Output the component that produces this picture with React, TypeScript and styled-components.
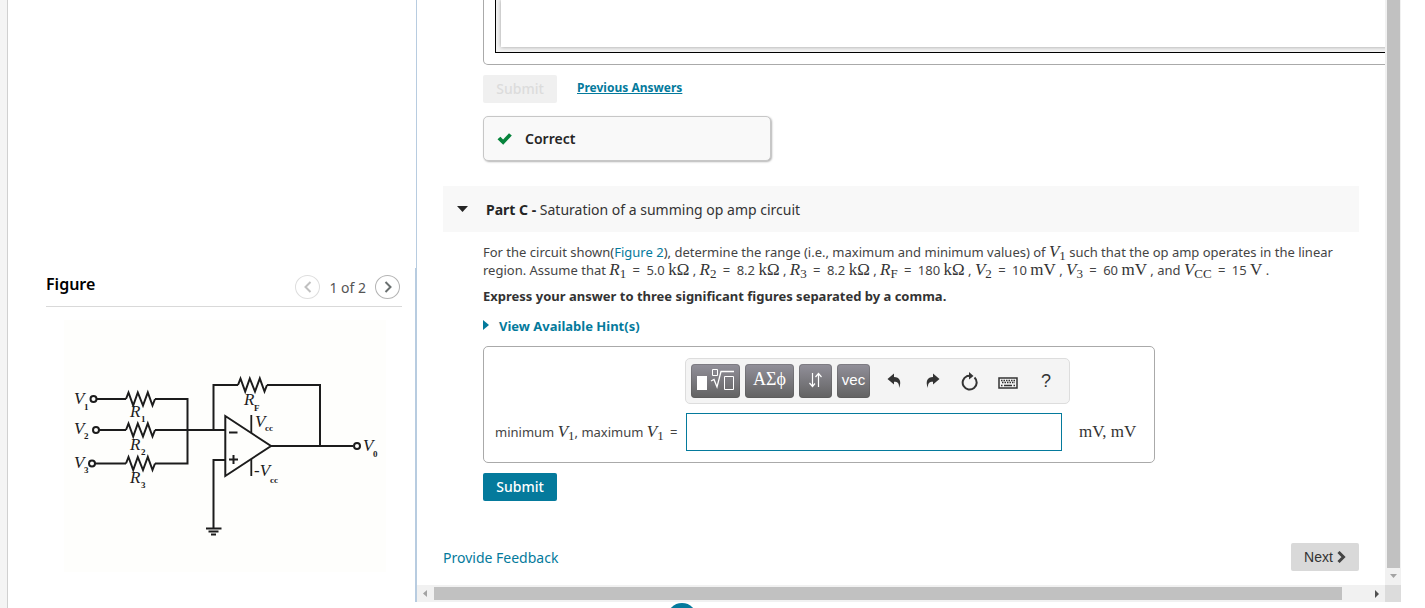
import React from "react";
import styled, { createGlobalStyle } from "styled-components";

const TEAL = "#047a9c";
const MATH = '"Liberation Serif", "Times New Roman", serif';

const GlobalStyle = createGlobalStyle`
  *, *::before, *::after { box-sizing: border-box; }
  body { margin: 0; background: #fff; color: #252525; font-family: "Segoe UI", "Noto Sans", "Open Sans", sans-serif; font-size: 13px; }
  button { font-family: inherit; border: 0; padding: 0; cursor: pointer; }
  p, h2, h3 { margin: 0; }
`;

const Page = styled.div`
  display: flex;
  height: 100vh;
  overflow: hidden;
`;
const Gutter = styled.div`
  flex: none;
  width: 8px;
  background: #f4f4f4;
  border-right: 1px solid #d0d0d0;
`;
const Shell = styled.div`
  flex: 1;
  min-width: 0;
  display: flex;
  flex-direction: column;
  padding-right: 24px;
`;
const Workspace = styled.div`
  flex: 1;
  min-height: 0;
  display: flex;
`;
const BottomStrip = styled.footer`
  flex: none;
  height: 6px;
  padding: 1px 0 0 659px;
  overflow: hidden;
`;
const HelpBubble = styled.button`
  display: block;
  width: 30px;
  height: 30px;
  border-radius: 50%;
  background: ${TEAL};
`;

/* Left column */
const Side = styled.aside`
  flex: none;
  width: 409px;
  display: flex;
  flex-direction: column;
`;
const SideTop = styled.div`
  flex: 268 0 0;
  border-right: 1px solid #b8cce0;
`;
const FigurePane = styled.section`
  flex: 334 0 0;
  min-height: 0;
  padding: 0 13px 0 38px;
  border-right: 2px solid #b8cce0;
  overflow: hidden;
`;
const FigureHeader = styled.header`
  display: flex;
  align-items: center;
  height: 39px;
  border-bottom: 1px solid #d9d9d9;
`;
const FigureTitle = styled.h2`
  flex: 1;
  padding-bottom: 7px;
  font-size: 16px;
  line-height: 24px;
  font-weight: 600;
  color: #000;
`;
const Pager = styled.nav`
  display: flex;
  align-items: center;
  gap: 9px;
  padding-right: 2px;
  font-size: 14px;
  color: #555;
`;
const PagerButton = styled.button`
  display: flex;
  align-items: center;
  justify-content: center;
  width: 25px;
  height: 24px;
  border: 1px solid #b4b4b4;
  border-radius: 50%;
  background: #fff;
  color: #6a7070;
  &:disabled { border-color: #dedede; color: #c0c0c0; }
`;
const Circuit = styled.svg`
  display: block;
  margin: 13px 0 0 18px;
  background: #fefefc;
  fill: none;
  stroke: #1c1c1c;
  stroke-width: 2;
  text { stroke: none; fill: #1c1c1c; font-family: ${MATH}; font-style: italic; font-size: 17px; }
  .sub { font-style: normal; font-weight: 700; font-size: 9px; }
`;

/* Main column */
const Main = styled.main`
  flex: 1;
  min-width: 0;
  display: flex;
  flex-direction: column;
`;
const ScrollRow = styled.div`
  flex: 1;
  min-height: 0;
  display: flex;
`;
const Content = styled.div`
  flex: 1;
  min-width: 0;
  padding: 0 26px;
  overflow: hidden;
`;
const Indent = styled.div`
  padding-left: 40px;
`;
const DrawingBox = styled.div`
  width: 1000px;
  padding: 0 11px 11px;
  border: 1px solid #aaa;
  border-top: 0;
  border-radius: 0 0 5px 5px;
`;
const DrawingFrame = styled.div`
  padding: 0 5px 5px;
  border: 1px solid #000;
  border-top: 0;
  background: #f2f2f2;
`;
const DrawingCanvas = styled.div`
  height: 47px;
  background: #fff;
  box-shadow: 0 0 4px rgba(0, 0, 0, 0.35);
`;
const SubmitRow = styled.div`
  display: flex;
  align-items: center;
  gap: 20px;
  margin-top: 10px;
`;
const SubmitButton = styled.button`
  display: block;
  width: 74px;
  height: 28px;
  padding-bottom: 2px;
  border-radius: 2px;
  background: ${TEAL};
  color: #fff;
  font-size: 14px;
  font-weight: 500;
  &:disabled { background: #f0f0f0; color: #dcdcdc; }
`;
const BoldLink = styled.a`
  padding-bottom: 3px;
  font-size: 12px;
  font-weight: 700;
  color: ${TEAL};
`;
const CorrectBox = styled.div`
  display: flex;
  align-items: center;
  gap: 13px;
  width: 288px;
  height: 45px;
  margin-top: 13px;
  padding-left: 13px;
  border: 1px solid #c7c7c7;
  border-radius: 5px;
  background: #f9f9f9;
  box-shadow: 1px 1px 2px rgba(0, 0, 0, 0.3);
  font-size: 14px;
  font-weight: 600;
`;
const PartHeader = styled.h3`
  display: flex;
  align-items: center;
  gap: 18px;
  height: 46px;
  margin-top: 25px;
  padding-left: 14px;
  background: #f8f8f8;
  font-size: 14px;
  font-weight: 400;
  color: #333;
  strong { font-weight: 700; color: #252525; }
`;
const Prompt = styled.p`
  margin-top: 11px;
  margin-right: -10px;
  line-height: 18px;
  color: #444;
  a { color: ${TEAL}; text-decoration: none; }
`;
const Instruction = styled.p`
  margin-top: 9px;
  font-size: 13px;
  line-height: 17px;
  font-weight: 700;
  color: #333;
`;
const HintToggle = styled.button`
  display: flex;
  align-items: center;
  gap: 9px;
  margin-top: 12px;
  background: none;
  color: ${TEAL};
  font-size: 13px;
  line-height: 18px;
  font-weight: 700;
`;
const MathText = styled.span`
  font-family: ${MATH};
  font-size: 17px;
  line-height: 1px;
  color: #333;
  white-space: nowrap;
  sub { font-size: 13px; line-height: 1px; vertical-align: -3px; }
`;
const Equals = styled.span`
  margin: 0 3px;
  &::before { content: "="; }
`;
const AnswerBox = styled.div`
  display: grid;
  grid-template-columns: 181px 376px auto;
  column-gap: 10px;
  row-gap: 9px;
  align-items: center;
  width: 672px;
  margin: 11px 0 10px;
  padding: 11px;
  border: 1px solid #aaa;
  border-radius: 5px;
`;
const AnswerLabel = styled.label`
  color: #444;
  white-space: nowrap;
`;
const AnswerInput = styled.input`
  width: 100%;
  height: 38px;
  padding: 0 8px;
  border: 1px solid ${TEAL};
  font-size: 16px;
  outline: 0;
`;
const Unit = styled.span`
  padding-left: 7px;
`;
const Toolbar = styled.div`
  grid-column: 2 / 4;
  justify-self: start;
  display: flex;
  align-items: center;
  gap: 5px;
  height: 46px;
  margin-left: -1px;
  padding: 0 4px 0 5px;
  border: 1px solid #ddd;
  border-radius: 5px;
  background: #f4f4f4;
`;
const ToolButton = styled.button<{ $wide?: boolean; $serif?: boolean }>`
  display: flex;
  align-items: center;
  justify-content: center;
  width: ${(p) => (p.$wide ? 49 : 33)}px;
  height: 34px;
  padding-bottom: 3px;
  border-radius: 4px;
  background: linear-gradient(#92909a, #626262);
  box-shadow: inset 0 0 0 1px rgba(80, 80, 80, 0.3);
  color: #fff;
  font-family: ${(p) => (p.$serif ? MATH : '"Liberation Sans", Arial, sans-serif')};
  font-size: ${(p) => (p.$serif ? 18 : 15)}px;
`;
const IconGroup = styled.div`
  display: flex;
`;
const IconButton = styled.button`
  display: flex;
  align-items: center;
  justify-content: center;
  width: 38px;
  height: 34px;
  background: none;
  color: #333;
  font-family: "Liberation Sans", Arial, sans-serif;
  font-size: 18px;
`;
const PageFooter = styled.div`
  display: flex;
  align-items: center;
  justify-content: space-between;
  margin-top: 42px;
`;
const FeedbackLink = styled.a`
  color: ${TEAL};
  font-size: 14px;
  text-decoration: none;
`;
const NextButton = styled.button`
  display: flex;
  align-items: center;
  justify-content: center;
  gap: 4px;
  width: 68px;
  height: 28px;
  border-radius: 2px;
  background: #d9d9d9;
  color: #333;
  font-family: "Liberation Sans", Arial, sans-serif;
  font-size: 14px;
`;

/* Scroll bars */
const VTrack = styled.div`
  flex: none;
  display: flex;
  flex-direction: column;
  align-items: center;
  justify-content: space-between;
  width: 16px;
  padding: 0 1px 5px 2px;
  background: #f1f1f1;
`;
const VThumb = styled.div`
  flex: 1;
  width: 100%;
  margin-bottom: 6px;
  background: #c1c1c1;
`;
const HRow = styled.div`
  flex: none;
  display: flex;
  height: 17px;
`;
const HTrack = styled.div`
  flex: 1;
  display: flex;
  align-items: center;
  padding: 0 6px;
  background: #f1f1f1;
`;
const HThumb = styled.div`
  flex: 1;
  height: 13px;
  margin: 0 33px 0 7px;
  background: #c1c1c1;
`;
const Corner = styled.div`
  width: 16px;
  background: #dcdcdc;
`;

const Resistor = ({ x, y }: { x: number; y: number }) => (
  <path
    transform={`translate(${x} ${y})`}
    d="M0 0L2.5 -6.500L7.2 6.500L11.8 -6.500L17 6.500L21.8 -6.500L26.5 6.500L29 0"
    strokeWidth="2"
  />
);

const CircuitDiagram = () => (
  <Circuit width="322" height="252" viewBox="64 320 322 252" role="img" aria-label="Summing op amp circuit">
    <circle cx="93.5" cy="399" r="3" />
    <circle cx="96" cy="430" r="3" />
    <circle cx="92" cy="463.5" r="3" />
    <path d="M97 399H126M155 399H187.5V463.5H155M99 430H126M155 430H225M95 463.5H126" />
    <Resistor x={126} y={399} />
    <Resistor x={126} y={430} />
    <Resistor x={126} y={463.5} />
    <path d="M213.5 430V385H238M267 385H320V446" />
    <Resistor x={238} y={385} />
    <path d="M225.3 416V476L271 446Z" />
    <path d="M271 446H353M225 460H213.5V529" />
    <circle cx="357" cy="446" r="3" />
    <path d="M206 528.500H221.500M208.500 531.500H218.500M211 534.500H216" strokeWidth="1.8" />
    <path d="M251.300 415V433M251.300 459V476" strokeWidth="1.8" />
    <path d="M229 432.500H237.500M229 459.500H238M233.500 455V464" />
    <text x="74" y="404">V</text><text className="sub" x="84" y="410">1</text>
    <text x="74" y="434">V</text><text className="sub" x="84" y="439">2</text>
    <text x="74" y="468">V</text><text className="sub" x="84" y="473">3</text>
    <text x="130" y="417">R</text><text className="sub" x="141" y="422">1</text>
    <text x="130" y="450">R</text><text className="sub" x="141" y="455">2</text>
    <text x="130" y="483">R</text><text className="sub" x="141" y="488">3</text>
    <text x="244" y="405">R</text><text className="sub" x="254" y="411">F</text>
    <text x="255" y="427">V</text><text className="sub" x="265" y="431">cc</text>
    <text x="254" y="476">-V</text><text className="sub" x="270" y="483">cc</text>
    <text x="363" y="451">V</text><text className="sub" x="373" y="457">0</text>
  </Circuit>
);

const Chevron = ({ left }: { left?: boolean }) => (
  <svg width="8" height="12" viewBox="0 0 8 12" fill="none" stroke="currentColor" strokeWidth="2">
    <path d={left ? "M6.500 1L1.500 6L6.500 11" : "M1.500 1L6.500 6L1.500 11"} />
  </svg>
);

const Triangle = ({ d, w, h, fill }: { d: string; w: number; h: number; fill: string }) => (
  <svg width={w} height={h} viewBox={`0 0 ${w} ${h}`} fill={fill}>
    <path d={d} />
  </svg>
);

const Var = ({ name, sub }: { name: string; sub: string }) => (
  <MathText>
    <i>{name}</i>
    <sub>{sub}</sub>
  </MathText>
);

export default function App() {
  return (
    <>
      <GlobalStyle />
      <Page>
        <Gutter />
        <Shell>
          <Workspace>
            <Side>
              <SideTop />
              <FigurePane>
                <FigureHeader>
                  <FigureTitle>Figure</FigureTitle>
                  <Pager aria-label="Figures">
                    <PagerButton disabled aria-label="Previous figure"><Chevron left /></PagerButton>
                    <span>1 of 2</span>
                    <PagerButton aria-label="Next figure"><Chevron /></PagerButton>
                  </Pager>
                </FigureHeader>
                <CircuitDiagram />
              </FigurePane>
            </Side>
            <Main>
              <ScrollRow>
                <Content>
                  <Indent>
                    <DrawingBox>
                      <DrawingFrame><DrawingCanvas /></DrawingFrame>
                    </DrawingBox>
                    <SubmitRow>
                      <SubmitButton disabled>Submit</SubmitButton>
                      <BoldLink href="#answers">Previous Answers</BoldLink>
                    </SubmitRow>
                    <CorrectBox>
                      <svg width="15" height="12" viewBox="0 0 15 12" fill="#07843c">
                        <path d="M0.500 6.200L3.400 3.700L6.100 6.500L12 0.200L14.800 2.600L6.200 11.800Z" />
                      </svg>
                      Correct
                    </CorrectBox>
                  </Indent>
                  <PartHeader>
                    <Triangle d="M0 0H11L5.500 6Z" w={11} h={6} fill="#252525" />
                    <span><strong>Part C - </strong>Saturation of a summing op amp circuit</span>
                  </PartHeader>
                  <Indent>
                    <Prompt>
                      For the circuit shown(<a href="#figure2">Figure 2</a>), determine the range (i.e., maximum and minimum
                      values) of <Var name="V" sub="1" /> such that the op amp operates in the linear region. Assume
                      that <Var name="R" sub="1" /> <Equals /> 5.0 <MathText>kΩ</MathText> , <Var name="R" sub="2" />{" "}
                      <Equals /> 8.2 <MathText>kΩ</MathText> , <Var name="R" sub="3" /> <Equals /> 8.2{" "}
                      <MathText>kΩ</MathText> , <Var name="R" sub="F" /> <Equals /> 180 <MathText>kΩ</MathText> ,{" "}
                      <Var name="V" sub="2" /> <Equals /> 10 <MathText>mV</MathText> , <Var name="V" sub="3" />{" "}
                      <Equals /> 60 <MathText>mV</MathText> , and <Var name="V" sub="CC" /> <Equals /> 15{" "}
                      <MathText>V</MathText> .
                    </Prompt>
                    <Instruction>Express your answer to three significant figures separated by a comma.</Instruction>
                    <HintToggle>
                      <Triangle d="M0 0L6 5L0 10Z" w={7} h={12} fill={TEAL} />
                      View Available Hint(s)
                    </HintToggle>
                    <AnswerBox>
                      <Toolbar role="toolbar" aria-label="Equation editor">
                        <ToolButton $wide aria-label="Templates">
                          <svg width="38" height="22" viewBox="0 0 38 22" fill="none" stroke="#fff">
                            <path d="M0 7H10V21H0Z" fill="#fff" stroke="none" />
                            <path d="M15.500 0.500H20.500V6.500H15.500Z" />
                            <path d="M14 12L17 10.500L20 18L24 2.500H37" strokeWidth="1.300" />
                            <path d="M27.500 7.500H36.500V20.500H27.500Z" />
                          </svg>
                        </ToolButton>
                        <ToolButton $wide $serif>ΑΣϕ</ToolButton>
                        <ToolButton aria-label="Subscript and superscript">
                          <svg width="13" height="16" viewBox="0 0 13 16" fill="none" stroke="#fff" strokeWidth="1.200">
                            <path d="M3.500 1V14M0.500 11L3.500 14.500L6 11.500M9.500 15V2M6.500 5L9.500 1.500L12.500 5" />
                          </svg>
                        </ToolButton>
                        <ToolButton>vec</ToolButton>
                        <IconGroup>
                          <IconButton aria-label="Undo">
                            <svg width="15" height="16" viewBox="0 0 15 16" fill="#333">
                              <path d="M0.500 6L7 0.500V4C12.500 4 15 8.500 12 15C12.300 10.500 11 8.700 7 8.700V11.500Z" />
                            </svg>
                          </IconButton>
                          <IconButton aria-label="Redo">
                            <svg width="15" height="16" viewBox="0 0 15 16" fill="#333">
                              <path d="M14.500 6L8 0.500V4C2.500 4 0 8.500 3 15C2.700 10.500 4 8.700 8 8.700V11.500Z" />
                            </svg>
                          </IconButton>
                          <IconButton aria-label="Reset">
                            <svg width="18" height="19" viewBox="0 0 18 19" fill="none" stroke="#333" strokeWidth="2">
                              <path d="M13.500 5.500A7 7 0 1 1 6 4.100L10 3.800" />
                              <path d="M8 0L12.500 4L8 7.500Z" fill="#333" stroke="none" />
                            </svg>
                          </IconButton>
                          <IconButton aria-label="Keyboard shortcuts">
                            <svg width="20" height="17" viewBox="0 0 20 17" fill="none" stroke="#333">
                              <path d="M1 5H19V15H1Z" strokeWidth="1.500" />
                              <path d="M3 7.500H17M4 9.500H17" strokeWidth="1.500" strokeDasharray="1.500 1" />
                              <path d="M3 12.500H4.500M6 12.500H14M15.500 12.500H17" strokeWidth="1.500" />
                            </svg>
                          </IconButton>
                          <IconButton aria-label="Help">?</IconButton>
                        </IconGroup>
                      </Toolbar>
                      <AnswerLabel htmlFor="answer">
                        minimum <Var name="V" sub="1" />, maximum <Var name="V" sub="1" /> <Equals />
                      </AnswerLabel>
                      <AnswerInput id="answer" type="text" />
                      <Unit><MathText>mV, mV</MathText></Unit>
                    </AnswerBox>
                    <SubmitButton>Submit</SubmitButton>
                  </Indent>
                  <PageFooter>
                    <FeedbackLink href="#feedback">Provide Feedback</FeedbackLink>
                    <NextButton>
                      Next
                      <svg width="9" height="12" viewBox="0 0 9 12" fill="none" stroke="#444" strokeWidth="3">
                        <path d="M1.500 1L6.500 6L1.500 11" />
                      </svg>
                    </NextButton>
                  </PageFooter>
                </Content>
                <VTrack>
                  <VThumb />
                  <Triangle d="M0 0H7L3.500 4Z" w={7} h={6} fill="#a3a3a3" />
                </VTrack>
              </ScrollRow>
              <HRow>
                <HTrack>
                  <Triangle d="M4 0V7L0 3.500Z" w={4} h={7} fill="#a3a3a3" />
                  <HThumb />
                  <Triangle d="M0 0V8L4 4Z" w={4} h={8} fill="#505050" />
                </HTrack>
                <Corner />
              </HRow>
            </Main>
          </Workspace>
          <BottomStrip><HelpBubble aria-label="Help" /></BottomStrip>
        </Shell>
      </Page>
    </>
  );
}
